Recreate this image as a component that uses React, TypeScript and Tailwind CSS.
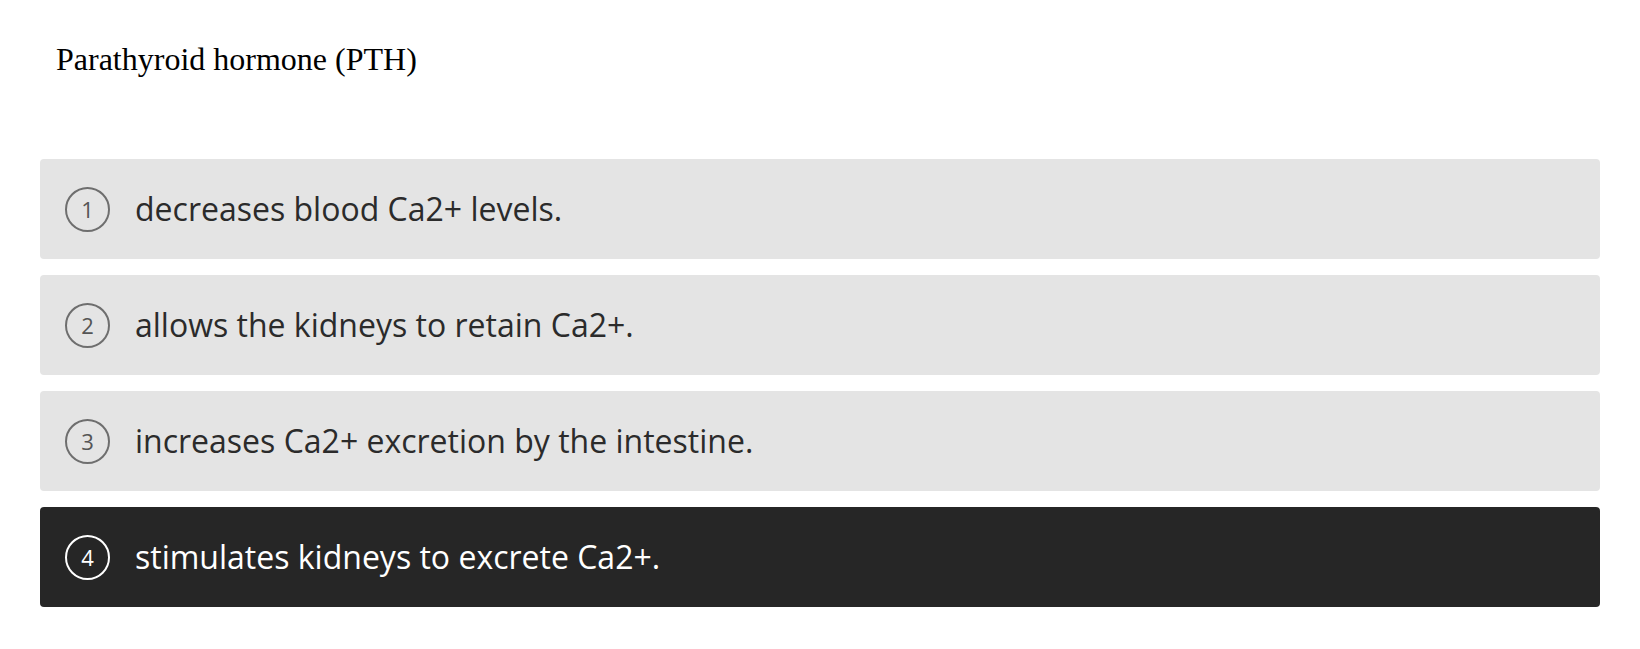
const OPTIONS = [
  'decreases blood Ca2+ levels.',
  'allows the kidneys to retain Ca2+.',
  'increases Ca2+ excretion by the intestine.',
  'stimulates kidneys to excrete Ca2+.',
];

// selected answer is shown dark
const SELECTED = 3;

export default function App() {
  return (
    <div className="min-h-screen bg-white px-10 pt-[39px]">
      <h1 className="pl-[16px] font-['Liberation_Serif',serif] text-[32px] leading-[40px] text-black">
        Parathyroid hormone (PTH)
      </h1>

      <div className="mt-[80px] flex flex-col gap-4">
        {OPTIONS.map((text, i) => {
          const active = i === SELECTED;
          return (
            <div
              key={text}
              className={`flex h-[100px] items-center gap-[25px] rounded-[4px] pl-[25px] font-['Open_Sans',sans-serif] ${
                active ? 'bg-[#262626] text-white' : 'bg-[#e4e4e4] text-[#2b2b2b]'
              }`}
            >
              <span
                className={`flex h-[45px] w-[45px] shrink-0 items-center justify-center rounded-full border-2 text-[22px] ${
                  active ? 'border-white text-white' : 'border-[#6e6e6e] text-[#555]'
                }`}
              >
                {i + 1}
              </span>
              <span className="text-[32px]">{text}</span>
            </div>
          );
        })}
      </div>
    </div>
  );
}
